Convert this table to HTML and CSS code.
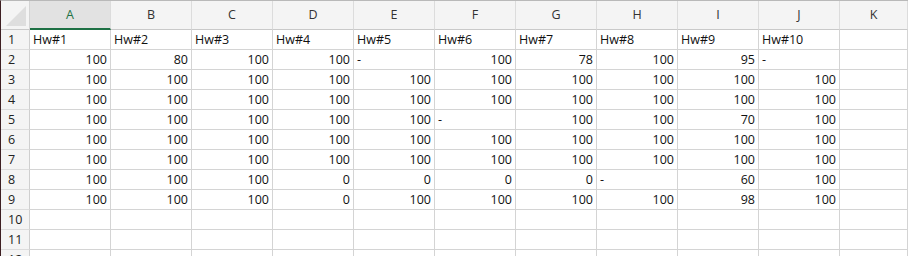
FILE: index.html
```html
<!DOCTYPE html>
<html lang="en">
<head>
  <meta charset="UTF-8">
  <title>Homework grades</title>
  <link rel="stylesheet" href="styles.css">
</head>
<body>
  <div class="sheet" id="sheet"></div>

  <script>
    const cols = ["A", "B", "C", "D", "E", "F", "G", "H", "I", "J", "K"];
    const rows = [
      ["Hw#1", "Hw#2", "Hw#3", "Hw#4", "Hw#5", "Hw#6", "Hw#7", "Hw#8", "Hw#9", "Hw#10"],
      [100, 80, 100, 100, "-", 100, 78, 100, 95, "-"],
      [100, 100, 100, 100, 100, 100, 100, 100, 100, 100],
      [100, 100, 100, 100, 100, 100, 100, 100, 100, 100],
      [100, 100, 100, 100, 100, "-", 100, 100, 70, 100],
      [100, 100, 100, 100, 100, 100, 100, 100, 100, 100],
      [100, 100, 100, 100, 100, 100, 100, 100, 100, 100],
      [100, 100, 100, 0, 0, 0, 0, "-", 60, 100],
      [100, 100, 100, 0, 100, 100, 100, 100, 98, 100],
      [], [], []
    ];
    const sheet = document.getElementById("sheet");

    function cell(cls, text) {
      const div = document.createElement("div");
      div.className = cls;
      if (text !== undefined) div.textContent = text;
      sheet.appendChild(div);
    }

    // header row
    cell("corner");
    cols.forEach((c, i) => cell(i === 0 ? "col-head active" : "col-head", c));

    rows.forEach((row, r) => {
      cell("row-head", r + 1);
      cols.forEach((c, i) => {
        const v = row[i];
        if (v === undefined) return cell("cell");
        cell(typeof v === "number" ? "cell num" : "cell", v);
      });
    });
  </script>
</body>
</html>
```

FILE: styles.css
```css
body, html {
  margin: 0;
  padding: 0;
  background-color: #fff;
  overflow: hidden;
}

.sheet {
  display: grid;
  grid-template-columns: 29px repeat(10, 81px) 1fr;
  grid-auto-rows: 20px;
  grid-template-rows: 29px;
  border-left: 1px solid #3d1f22;
  border-top: 1px solid #b9b9b9;
  font-family: "Open Sans", "Liberation Sans", sans-serif;
  font-size: 12.5px;
  color: #111;
}

.corner {
  position: relative;
  background-color: #f4f4f4;
  border-right: 1px solid #d4d4d4;
  border-bottom: 1px solid #c9c9c9;
}

/* little grey triangle of the select-all button */
.corner::after {
  content: "";
  position: absolute;
  right: 3px;
  bottom: 3px;
  border-left: 20px solid transparent;
  border-bottom: 20px solid #dedede;
}

.col-head {
  background-color: #f4f4f4;
  border-right: 1px solid #dcdcdc;
  border-bottom: 1px solid #c9c9c9;
  display: flex;
  align-items: center;
  justify-content: center;
  color: #333;
  padding-bottom: 1px;
}

.col-head.active {
  background-color: #e2e2e2;
  color: #1e7145;
  border-bottom: 2px solid #1e7145;
}

.row-head {
  background-color: #f4f4f4;
  border-right: 1px solid #cfcfcf;
  border-bottom: 1px solid #dcdcdc;
  display: flex;
  align-items: center;
  padding-left: 7px;
  color: #222;
}

.cell {
  border-right: 1px solid #d4d4d4;
  border-bottom: 1px solid #d4d4d4;
  display: flex;
  align-items: center;
  padding: 0 3px;
  white-space: nowrap;
  overflow: hidden;
}

.cell.num {
  justify-content: flex-end;
}
```
